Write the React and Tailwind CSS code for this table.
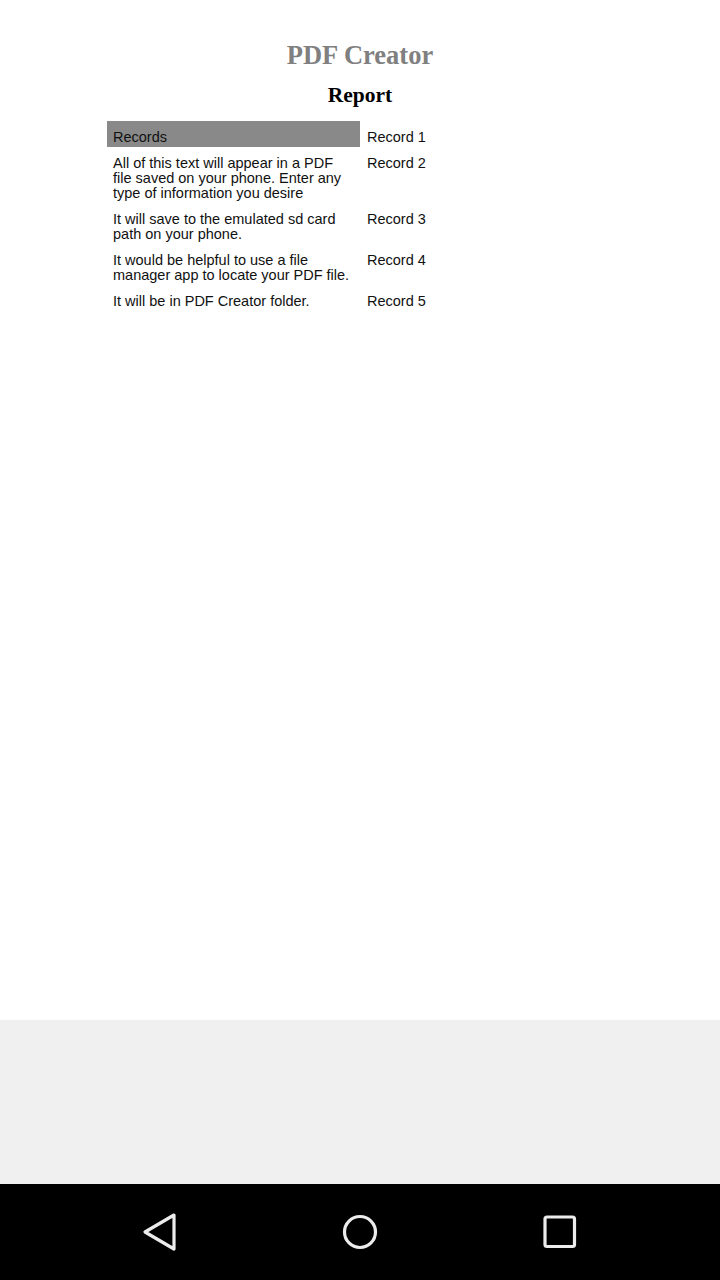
const rows = [
  {
    lines: [
      "All of this text will appear in a PDF",
      "file saved on your phone. Enter any",
      "type of information you desire",
    ],
    record: "Record 2",
  },
  {
    lines: ["It will save to the emulated sd card", "path on your phone."],
    record: "Record 3",
  },
  {
    lines: ["It would be helpful to use a file", "manager app to locate your PDF file."],
    record: "Record 4",
  },
  { lines: ["It will be in PDF Creator folder."], record: "Record 5" },
];

function NavBar() {
  return (
    <div className="h-[96px] bg-black flex items-center justify-between px-[142px]">
      <svg width="36" height="40" viewBox="0 0 36 40" fill="none">
        <path
          d="M32 3 L3 20 L32 37 Z"
          stroke="#ececec"
          strokeWidth="3.2"
          strokeLinejoin="round"
        />
      </svg>
      <svg width="38" height="38" viewBox="0 0 38 38" fill="none">
        <circle cx="19" cy="19" r="15.5" stroke="#ececec" strokeWidth="3.2" />
      </svg>
      <svg width="36" height="36" viewBox="0 0 36 36" fill="none">
        <rect
          x="3"
          y="3"
          width="29.5"
          height="29.5"
          rx="2"
          stroke="#ececec"
          strokeWidth="3.2"
        />
      </svg>
    </div>
  );
}

export default function App() {
  return (
    <div className="w-[720px] h-[1280px] flex flex-col bg-white">
      <div className="h-[1020px] bg-white pt-[40px]">
        <h1 className="text-center font-['Liberation_Serif',serif] font-bold text-[26.5px] leading-[30px] text-[#808080]">
          PDF Creator
        </h1>
        <h2 className="mt-[13px] text-center font-['Liberation_Serif',serif] font-bold text-[21.5px] leading-[24px] text-black">
          Report
        </h2>

        <div className="mt-[14px] pl-[107px] font-['Liberation_Sans',Arial,sans-serif] text-[14.5px] leading-[15px] text-[#111]">
          <div className="flex">
            <div className="w-[253px] h-[26px] bg-[#898989] pl-[6px] pt-[9px]">
              Records
            </div>
            <div className="pl-[7px] pt-[9px]">Record 1</div>
          </div>

          <div className="mt-[9px] flex flex-col gap-[11px]">
            {rows.map((row) => (
              <div key={row.record} className="flex">
                <div className="w-[253px] pl-[6px] whitespace-nowrap">
                  {row.lines.map((line) => (
                    <div key={line}>{line}</div>
                  ))}
                </div>
                <div className="pl-[7px]">{row.record}</div>
              </div>
            ))}
          </div>
        </div>
      </div>

      <div className="h-[164px] bg-[#f0f0f0]" />
      <NavBar />
    </div>
  );
}
